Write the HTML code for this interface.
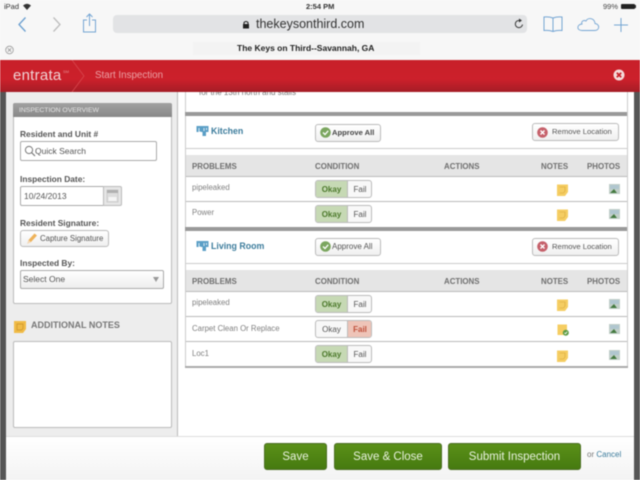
<!DOCTYPE html>
<html>
<head>
<meta charset="utf-8">
<style>
html,body{margin:0;padding:0;width:640px;height:480px;overflow:hidden;background:#fff}
body{position:relative;font-family:"Liberation Sans",sans-serif;color:#555;filter:blur(.4px)}
.a{position:absolute;box-sizing:border-box}
.t{position:absolute;white-space:nowrap;line-height:12px}
.btn{position:absolute;box-sizing:border-box;border:1px solid #bbb;border-radius:3px;background:linear-gradient(#fff,#f0f0f0);white-space:nowrap}
.th{position:absolute;font-size:7.9px;font-weight:bold;color:#6f6f6f;line-height:12px;white-space:nowrap}
.lab{position:absolute;font-size:8.4px;font-weight:bold;color:#555;line-height:12px;white-space:nowrap}
.row{position:absolute;font-size:7.8px;color:#808080;line-height:12px;white-space:nowrap;left:192px}
.ok{position:absolute;box-sizing:border-box;left:315px;width:57px;height:18px;border:1px solid #bbb;border-radius:3px;background:#f8f8f8;font-size:8px;line-height:17px;overflow:hidden}
.ok b,.ok span{position:absolute;top:0;height:16px;text-align:center}
.ok .l{left:0;width:31px}
.ok .r{left:31px;width:24px;border-left:1px solid #bbb}
.on{background:#c6d9b4;color:#4d7a2c;font-weight:bold}
.bad{background:#eec4b8;color:#bf4f3a;font-weight:bold}
.gb{position:absolute;top:443px;height:27px;box-sizing:border-box;border:1px solid #4a6d22;border-radius:3px;background:linear-gradient(#5a9018,#467a10);color:#e8f2de;font-size:11.5px;line-height:27px;text-align:center}
</style>
</head>
<body>
<!-- top browser bar -->
<div class="a" style="left:0;top:0;width:640px;height:60px;background:#f7f7f7"></div>
<div class="t" style="left:4px;top:1px;font-size:7.5px;color:#333">iPad</div>
<svg class="a" style="left:23px;top:3px" width="8" height="7" viewBox="0 0 8 7"><path d="M0 2.5Q4-1 8 2.5L4 7Z" fill="#333"/></svg>
<div class="t" style="left:306px;top:1px;font-size:7.5px;font-weight:bold;color:#333">2:54 PM</div>
<div class="t" style="left:603px;top:1px;font-size:7.5px;color:#444">99%</div>
<div class="a" style="left:621px;top:4px;width:14px;height:5px;background:#222;border-radius:1px"></div>
<div class="a" style="left:635px;top:5px;width:1px;height:3px;background:#333"></div>
<svg class="a" style="left:15px;top:15px" width="14" height="18" viewBox="0 0 14 18"><path d="M10.500 2.500L4 9.500L10.500 16.500" fill="none" stroke="#6a9fd0" stroke-width="1.300"/></svg>
<svg class="a" style="left:50px;top:15px" width="14" height="18" viewBox="0 0 14 18"><path d="M3.500 2.500L10 9.500L3.500 16.500" fill="none" stroke="#bdbdbd" stroke-width="1.300"/></svg>
<svg class="a" style="left:82px;top:13px" width="15" height="20" viewBox="0 0 15 20"><path d="M5 7H1.500V19H13.500V7H10M7.500 13V1.500M4.500 4L7.500 1L10.500 4" fill="none" stroke="#74a5d3" stroke-width="1"/></svg>
<div class="a" style="left:113px;top:15px;width:414px;height:18px;background:#e2e3e5;border-radius:4px"></div>
<svg class="a" style="left:242px;top:20px" width="8" height="9" viewBox="0 0 8 9"><path d="M2 4V2.500Q4 .5 6 2.500V4" fill="none" stroke="#222"/><rect x="1" y="4" width="6" height="4.500" fill="#222"/></svg>
<div class="t" style="left:256px;top:17px;font-size:12.500px;line-height:14px;color:#333">thekeysonthird.com</div>
<svg class="a" style="left:513px;top:18px" width="12" height="12" viewBox="0 0 12 12"><path d="M9.500 6.500A3.600 3.600 0 1 1 6.500 2.500" fill="none" stroke="#333" stroke-width="1"/><path d="M6 .5L9 2.500L6 4.500Z" fill="#333"/></svg>
<svg class="a" style="left:543px;top:15px" width="20" height="18" viewBox="0 0 20 18"><path d="M10 3Q6 1.500 1 2V15.500Q6 15 10 16.500Q14 15 19 15.500V2Q14 1.500 10 3ZM10 3V16.500" fill="none" stroke="#74a5d3" stroke-width="1"/></svg>
<svg class="a" style="left:576px;top:15px" width="24" height="18" viewBox="0 0 24 18"><path d="M6 15.500H18.500C24 15.500 24 9 19 8.500C18.500 3 12 2 10 6C7 4.500 5 7 6 9C.5 9.500 .5 15.500 6 15.500Z" fill="none" stroke="#74a5d3" stroke-width=".9"/></svg>
<svg class="a" style="left:613px;top:17px" width="16" height="16" viewBox="0 0 16 16"><path d="M8 1V15M1 8H15" fill="none" stroke="#74a5d3" stroke-width="1"/></svg>
<svg class="a" style="left:4px;top:44px" width="11" height="12" viewBox="0 0 11 12"><circle cx="5.500" cy="6" r="3.800" fill="none" stroke="#999" stroke-width=".8"/><path d="M3.800 4.300L7.200 7.700M7.200 4.300L3.800 7.700" stroke="#999" stroke-width=".8"/></svg>
<div class="a" style="left:193px;top:42px;width:227px;height:13px;background:#f3f3f3"></div>
<div class="t" style="left:237px;top:42px;font-size:8.500px;font-weight:bold;color:#222">The Keys on Third--Savannah, GA</div>

<!-- side strips and page -->
<div class="a" style="left:0;top:92px;width:640px;height:388px;background:#555"></div>
<div class="a" style="left:6px;top:92px;width:171px;height:344px;background:#ededed"></div>
<div class="a" style="left:177px;top:92px;width:457px;height:344px;background:#fff;border-left:1px solid #bbb"></div>

<!-- left panel -->
<div class="a" style="left:13px;top:103px;width:159px;height:201px;background:#fff;border:1px solid #bbb;border-radius:2px"></div>
<div class="a" style="left:13px;top:103px;width:159px;height:14px;background:linear-gradient(#a0a0a0,#888);border-radius:2px 2px 0 0"></div>
<div class="t" style="left:19px;top:105px;font-size:6.800px;color:#e6e6e6">INSPECTION OVERVIEW</div>
<div class="lab" style="left:20px;top:128px">Resident and Unit #</div>
<div class="a" style="left:20px;top:141px;width:137px;height:20px;background:#fff;border:1px solid #aaa;border-radius:2px"></div>
<svg class="a" style="left:24px;top:145px" width="12" height="12" viewBox="0 0 12 12"><circle cx="5" cy="5" r="3.600" fill="none" stroke="#777" stroke-width="1"/><path d="M7.500 7.500L11 11" stroke="#777" stroke-width="1.200"/></svg>
<div class="t" style="left:35px;top:145px;font-size:8.500px;color:#555">Quick Search</div>
<div class="lab" style="left:20px;top:173px">Inspection Date:</div>
<div class="a" style="left:20px;top:186px;width:84px;height:20px;background:#fff;border:1px solid #aaa;border-radius:2px 0 0 2px"></div>
<div class="t" style="left:24px;top:190px;font-size:8.500px;color:#555">10/24/2013</div>
<div class="a" style="left:103px;top:186px;width:19px;height:20px;background:#e6e6e6;border:1px solid #bbb;border-radius:0 2px 2px 0"></div>
<svg class="a" style="left:106px;top:189px" width="13" height="14" viewBox="0 0 13 14"><rect x="1" y="1" width="11" height="12" fill="#ddd" stroke="#c4c4c4" stroke-width=".7"/><rect x="1" y="1" width="11" height="3" fill="#b0b0b0"/><rect x="2.500" y="8" width="8" height="4" fill="#f5f5f5"/></svg>
<div class="lab" style="left:20px;top:217px">Resident Signature:</div>
<div class="btn" style="left:20px;top:230px;width:89px;height:17px"></div>
<svg class="a" style="left:26px;top:232px" width="12" height="13" viewBox="0 0 12 13"><path d="M1.500 11.500L2.500 8L8.500 1.500L11 3.500L5 10Z" fill="#eeb25a"/><path d="M1 12L2.500 8L5 10Z" fill="#f3d7b4"/></svg>
<div class="t" style="left:40px;top:233px;font-size:7.800px;color:#555">Capture Signature</div>
<div class="lab" style="left:20px;top:257px">Inspected By:</div>
<div class="a" style="left:20px;top:270px;width:144px;height:19px;background:linear-gradient(#fff,#eee);border:1px solid #aaa;border-radius:2px"></div>
<div class="t" style="left:23px;top:273px;font-size:8.500px;color:#555">Select One</div>
<svg class="a" style="left:153px;top:277px" width="6" height="5" viewBox="0 0 6 5"><path d="M0 0H6L3 5Z" fill="#999"/></svg>
<svg class="a" style="left:14px;top:320px" width="12" height="13" viewBox="0 0 12 13"><path d="M0 1H12V9L9 13H0Z" fill="#f0bb46"/><path d="M3 4H9V8.500L7.500 10H3Z" fill="none" stroke="#c9932a" stroke-width=".7"/></svg>
<div class="t" style="left:31px;top:319px;font-size:9px;font-weight:bold;color:#777">ADDITIONAL NOTES</div>
<div class="a" style="left:13px;top:341px;width:159px;height:87px;background:#fff;border:1px solid #bbb;border-radius:2px"></div>

<!-- right content -->
<div class="t" style="left:199px;top:87px;font-size:8px;color:#777">for the 13th north and stalls</div>
<div class="a" style="left:185px;top:92px;width:443px;height:275px;border-left:1px solid #ccc;border-right:1px solid #ccc"></div>
<div class="a" style="left:185px;top:112px;width:442px;height:4px;background:#999"></div>
<svg class="a" style="left:196px;top:125px" width="13" height="12" viewBox="0 0 13 12"><path d="M.5 1H12.500V7H10V11H6.500V7H.5Z" fill="#5b9fc6"/><path d="M3 3V7H5M8 3V6M10.500 3V5" stroke="#fff" stroke-width=".8" fill="none"/></svg>
<div class="t" style="left:211px;top:125px;font-size:8.800px;font-weight:bold;color:#3c7c9c">Kitchen</div>
<div class="btn" style="left:315px;top:124px;width:66px;height:18px"></div>
<svg class="a" style="left:320px;top:127px" width="11" height="11" viewBox="0 0 11 11"><circle cx="5.500" cy="5.500" r="5.300" fill="#7ba65f"/><path d="M3 5.500L5 7.500L8.200 3.800" fill="none" stroke="#fff" stroke-width="1.300"/></svg>
<div class="t" style="left:332px;top:127px;font-size:7.600px;color:#444;font-weight:bold">Approve All</div>
<div class="btn" style="left:532px;top:123px;width:87px;height:18px"></div>
<svg class="a" style="left:537px;top:127px" width="11" height="11" viewBox="0 0 11 11"><circle cx="5.500" cy="5.500" r="5.300" fill="#c5606a"/><path d="M3.500 3.500L7.500 7.500M7.500 3.500L3.500 7.500" stroke="#fff" stroke-width="1.400"/></svg>
<div class="t" style="left:552px;top:126px;font-size:7.700px;color:#555">Remove Location</div>
<div class="a" style="left:185px;top:148px;width:442px;height:1px;background:#ccc"></div>
<div class="a" style="left:186px;top:155px;width:441px;height:22px;background:#e5e5e5;border-bottom:1px solid #bbb"></div>
<div class="th" style="left:192px;top:161px">PROBLEMS</div>
<div class="th" style="left:315px;top:161px">CONDITION</div>
<div class="th" style="left:444px;top:161px">ACTIONS</div>
<div class="th" style="left:541px;top:161px">NOTES</div>
<div class="th" style="left:587px;top:161px">PHOTOS</div>
<div class="row" style="top:182px">pipeleaked</div>
<div class="ok" style="top:180px"><b class="l on">Okay</b><span class="r">Fail</span></div>
<div class="a" style="left:186px;top:201px;width:441px;height:1px;background:#bbb"></div>
<div class="row" style="top:207px">Power</div>
<div class="ok" style="top:205px"><b class="l on">Okay</b><span class="r">Fail</span></div>
<div class="a" style="left:185px;top:227px;width:442px;height:4px;background:#999"></div>

<div class="a" style="left:186px;top:263px;width:441px;height:1px;background:#ccc"></div>
<svg class="a" style="left:196px;top:240px" width="13" height="12" viewBox="0 0 13 12"><path d="M.5 1H12.500V7H10V11H6.500V7H.5Z" fill="#5b9fc6"/><path d="M3 3V7H5M8 3V6M10.500 3V5" stroke="#fff" stroke-width=".8" fill="none"/></svg>
<div class="t" style="left:211px;top:240px;font-size:8.800px;font-weight:bold;color:#3c7c9c">Living Room</div>
<div class="btn" style="left:315px;top:238px;width:66px;height:18px"></div>
<svg class="a" style="left:320px;top:241px" width="11" height="11" viewBox="0 0 11 11"><circle cx="5.500" cy="5.500" r="5.300" fill="#7ba65f"/><path d="M3 5.500L5 7.500L8.200 3.800" fill="none" stroke="#fff" stroke-width="1.300"/></svg>
<div class="t" style="left:332px;top:241px;font-size:8px;color:#555">Approve All</div>
<div class="btn" style="left:532px;top:238px;width:87px;height:18px"></div>
<svg class="a" style="left:537px;top:241px" width="11" height="11" viewBox="0 0 11 11"><circle cx="5.500" cy="5.500" r="5.300" fill="#c5606a"/><path d="M3.500 3.500L7.500 7.500M7.500 3.500L3.500 7.500" stroke="#fff" stroke-width="1.400"/></svg>
<div class="t" style="left:552px;top:241px;font-size:7.700px;color:#555">Remove Location</div>
<div class="a" style="left:186px;top:270px;width:441px;height:22px;background:#e5e5e5;border-bottom:1px solid #bbb"></div>
<div class="th" style="left:192px;top:276px">PROBLEMS</div>
<div class="th" style="left:315px;top:276px">CONDITION</div>
<div class="th" style="left:444px;top:276px">ACTIONS</div>
<div class="th" style="left:541px;top:276px">NOTES</div>
<div class="th" style="left:587px;top:276px">PHOTOS</div>
<div class="row" style="top:297px">pipeleaked</div>
<div class="ok" style="top:295px"><b class="l on">Okay</b><span class="r">Fail</span></div>
<div class="a" style="left:186px;top:316px;width:441px;height:1px;background:#bbb"></div>
<div class="row" style="top:323px">Carpet Clean Or Replace</div>
<div class="ok" style="top:320px"><span class="l">Okay</span><b class="r bad">Fail</b></div>
<div class="a" style="left:186px;top:341px;width:441px;height:1px;background:#bbb"></div>
<div class="row" style="top:348px">Loc1</div>
<div class="ok" style="top:345px"><b class="l on">Okay</b><span class="r">Fail</span></div>
<div class="a" style="left:185px;top:366px;width:443px;height:2px;background:#aaa"></div>

<!-- note icons -->
<svg class="a" style="left:557px;top:184px" width="11" height="12" viewBox="0 0 11 12"><path d="M0 .5H11V8L8 12H0Z" fill="#f5cd62"/><path d="M2.500 3H8V7L6.500 9H2.500" fill="none" stroke="#d9a83a" stroke-width=".6"/></svg>
<svg class="a" style="left:557px;top:209px" width="11" height="12" viewBox="0 0 11 12"><path d="M0 .5H11V8L8 12H0Z" fill="#f5cd62"/><path d="M2.500 3H8V7L6.500 9H2.500" fill="none" stroke="#d9a83a" stroke-width=".6"/></svg>
<svg class="a" style="left:557px;top:299px" width="11" height="12" viewBox="0 0 11 12"><path d="M0 .5H11V8L8 12H0Z" fill="#f5cd62"/><path d="M2.500 3H8V7L6.500 9H2.500" fill="none" stroke="#d9a83a" stroke-width=".6"/></svg>
<svg class="a" style="left:557px;top:324px" width="12" height="12" viewBox="0 0 12 12"><path d="M.5 .5H10V7L7 11H.5Z" fill="#f5cd62"/><circle cx="8.800" cy="8.800" r="3" fill="#5d9c45"/><path d="M7.500 8.800L8.500 9.800L10.200 7.800" fill="none" stroke="#fff" stroke-width=".8"/></svg>
<svg class="a" style="left:557px;top:350px" width="11" height="12" viewBox="0 0 11 12"><path d="M0 .5H11V8L8 12H0Z" fill="#f5cd62"/><path d="M2.500 3H8V7L6.500 9H2.500" fill="none" stroke="#d9a83a" stroke-width=".6"/></svg>
<!-- photo icons -->
<svg class="a" style="left:609px;top:184px" width="11" height="10" viewBox="0 0 11 10"><rect width="11" height="10" fill="#c2cfc9"/><rect x="1" y="1" width="9" height="4" fill="#b0c6cf"/><path d="M1 9L5 5L8 9Z" fill="#447a40"/></svg>
<svg class="a" style="left:609px;top:209px" width="11" height="10" viewBox="0 0 11 10"><rect width="11" height="10" fill="#c2cfc9"/><rect x="1" y="1" width="9" height="4" fill="#b0c6cf"/><path d="M1 9L5 5L8 9Z" fill="#447a40"/></svg>
<svg class="a" style="left:609px;top:299px" width="11" height="10" viewBox="0 0 11 10"><rect width="11" height="10" fill="#c2cfc9"/><rect x="1" y="1" width="9" height="4" fill="#b0c6cf"/><path d="M1 9L5 5L8 9Z" fill="#447a40"/></svg>
<svg class="a" style="left:609px;top:324px" width="11" height="10" viewBox="0 0 11 10"><rect width="11" height="10" fill="#c2cfc9"/><rect x="1" y="1" width="9" height="4" fill="#b0c6cf"/><path d="M1 9L5 5L8 9Z" fill="#447a40"/></svg>
<svg class="a" style="left:609px;top:350px" width="11" height="10" viewBox="0 0 11 10"><rect width="11" height="10" fill="#c2cfc9"/><rect x="1" y="1" width="9" height="4" fill="#b0c6cf"/><path d="M1 9L5 5L8 9Z" fill="#447a40"/></svg>

<!-- red header -->
<div class="a" style="left:0;top:60px;width:640px;height:32px;background:linear-gradient(#c8202a 0,#cc202b 60%,#a51d26 100%)"></div>
<div class="t" style="left:13px;top:67px;font-size:15px;line-height:18px;color:#f0d4d5;letter-spacing:.25px">entrata</div>
<div class="t" style="left:63px;top:68px;font-size:4px;line-height:8px;color:#e58f92">SM</div>
<svg class="a" style="left:70px;top:60px" width="16" height="32" viewBox="0 0 16 32"><path d="M2 0L14 16L2 32" fill="none" stroke="#d8474e" stroke-width=".8"/></svg>
<div class="t" style="left:95px;top:70px;font-size:9.800px;color:#eba0a4">Start Inspection</div>
<svg class="a" style="left:613px;top:69px" width="12" height="12" viewBox="0 0 12 12"><circle cx="6" cy="6" r="5.500" fill="#f5dcdc"/><path d="M3.800 3.800L8.200 8.200M8.200 3.800L3.800 8.200" stroke="#c8202a" stroke-width="1.800"/></svg>

<!-- footer -->
<div class="a" style="left:6px;top:436px;width:628px;height:44px;background:linear-gradient(#fff,#f3f3f3);border-top:1px solid #ddd"></div>
<div class="gb" style="left:264px;width:63px">Save</div>
<div class="gb" style="left:334px;width:108px">Save &amp; Close</div>
<div class="gb" style="left:448px;width:133px">Submit Inspection</div>
<div class="t" style="left:587px;top:449px;font-size:8px;color:#777">or <span style="color:#3c7c9c">Cancel</span></div>
</body>
</html>
